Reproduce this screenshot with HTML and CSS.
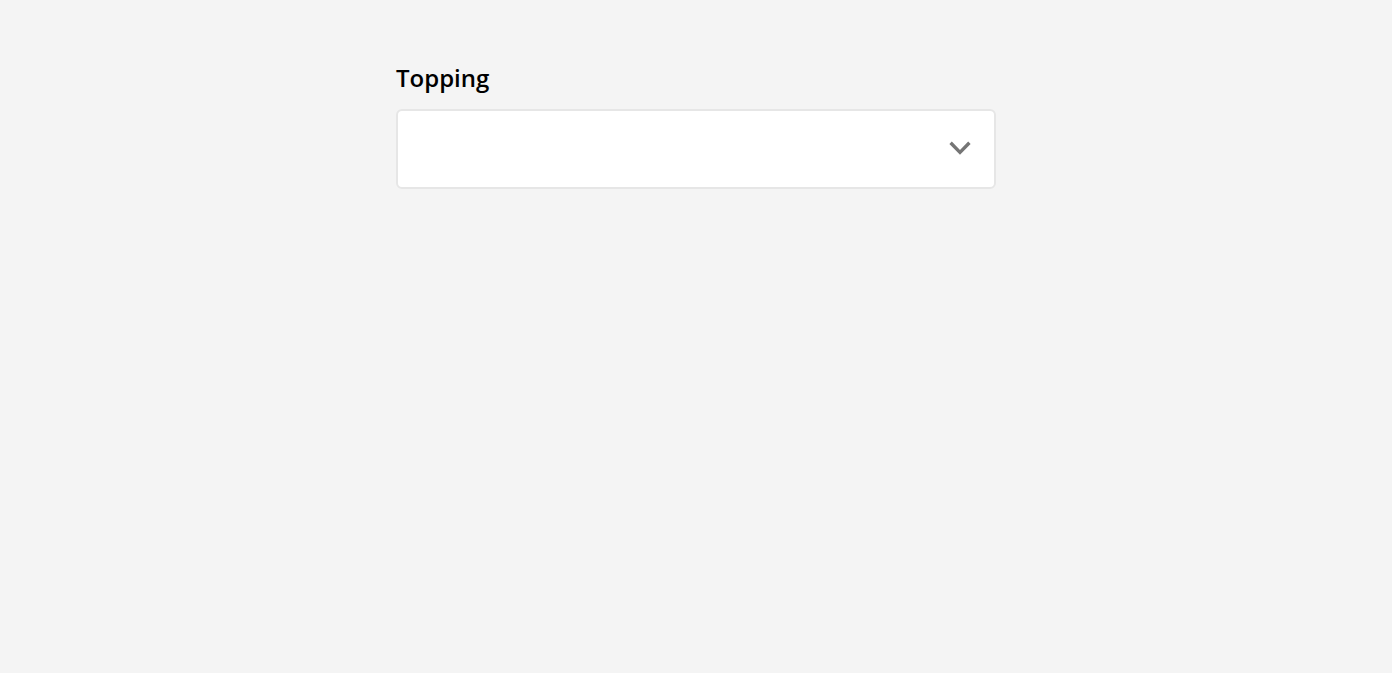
FILE: index.html
```html
<!DOCTYPE html>
<html lang="en">
<head>
  <title>Topping</title>
  <meta charset="UTF-8"/>
  <meta name="viewport" content="width=device-width,initial-scale=1"/>
  <link rel="stylesheet" href="styles.css">
</head>
<body>
<div class="field">
  <label class="field-label" for="topping">Topping</label>
  <div class="select-box" id="topping">
    <span class="select-value"></span>
    <svg class="chevron" width="22" height="14" viewBox="0 0 22 14">
      <path d="M1.6 1.8 L11 11.4 L20.4 1.8" fill="none" stroke="#757575" stroke-width="3.4"/>
    </svg>
  </div>
</div>
</body>
</html>
```

FILE: styles.css
```css
body {
  margin: 0;
  height: 100vh;
  background: #f4f4f4;
  font-family: "Open Sans", Helvetica, Arial, sans-serif;
}

.field {
  width: 600px;
  margin: 0 auto;
  padding-top: 60px;
}

.field-label {
  display: block;
  font-size: 24px;
  font-weight: 600;
  line-height: 36px;
  color: #000;
  margin-bottom: 13px;
}

.select-box {
  box-sizing: border-box;
  height: 80px;
  display: flex;
  align-items: center;
  justify-content: space-between;
  padding: 0 23px 2px 20px;
  background: #fff;
  border: 2px solid #e6e6e6;
  border-radius: 6px;
}

.chevron {
  display: block;
}
```
